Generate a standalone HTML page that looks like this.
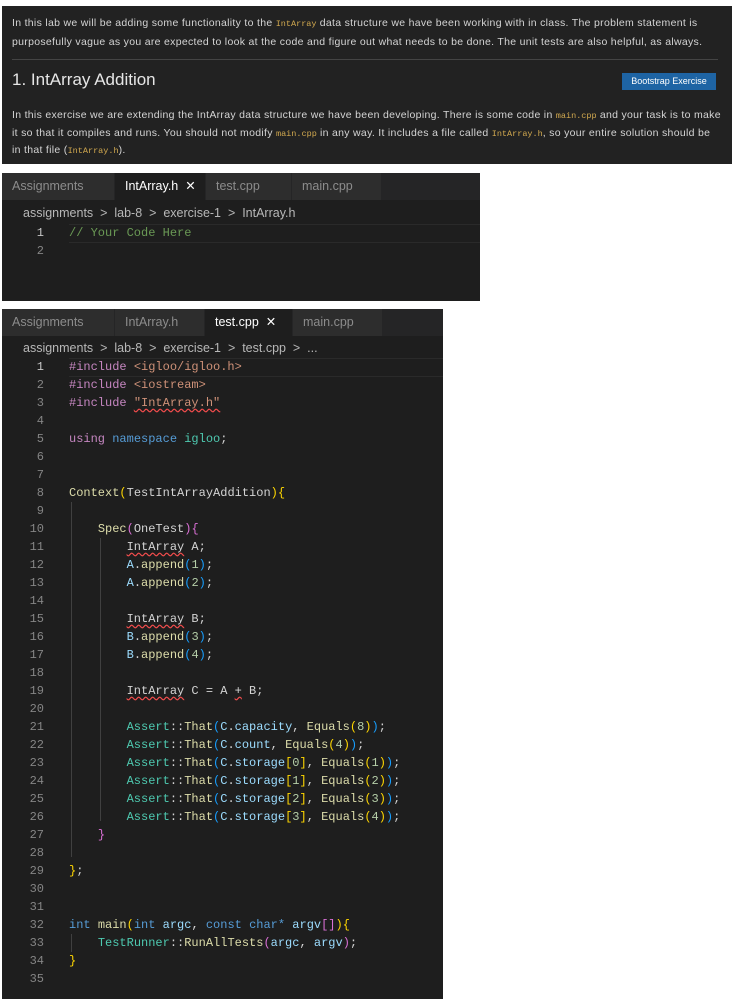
<!DOCTYPE html>
<html><head><style>
body{margin:0;background:#fff;width:734px;height:1005px;position:relative;overflow:hidden;font-family:"Liberation Sans",sans-serif}
.top{position:absolute;left:2px;top:6px;width:730px;height:158px;background:#222;color:#d4d4d4;font-size:10.5px;letter-spacing:0.3px}
.top p{position:absolute;left:10px;margin:0;width:712px;white-space:nowrap}
.c{font-family:"Liberation Mono",monospace;color:#d2a94f;font-size:8.5px;letter-spacing:0}
.hr{position:absolute;left:10px;width:706px;top:53px;height:1px;background:#444}
.h1{position:absolute;left:10px;top:64px;font-size:17px;color:#e6e6e6;letter-spacing:0}
.badge{position:absolute;left:620px;top:67px;width:94px;height:17px;background:#1e64a4;color:#fff;font-size:9px;line-height:17px;text-align:center;letter-spacing:0}
.ed{position:absolute;left:2px;background:#1e1e1e;font-family:"Liberation Sans",sans-serif}
.tabs{position:absolute;left:0;top:0;height:27px;background:#252526;width:100%}
.tab{position:absolute;top:0;height:27px;line-height:26px;background:#2d2d2d;color:#8c8c8c;font-size:12.5px;padding-left:10px;box-sizing:border-box;border-right:1px solid #252526}
.tab.a{background:#1e1e1e;color:#fff}
.bc{position:absolute;left:21px;color:#b8b8b8;font-size:12.5px}
.code{position:absolute;left:0;font-family:"Liberation Mono",monospace;font-size:12px;white-space:pre;color:#d4d4d4}
.ln{position:absolute;width:42px;text-align:right;color:#858585;font-family:"Liberation Mono",monospace;font-size:12px}
.l{height:18px;line-height:18px}
.pp{color:#c586c0}.s{color:#ce9178}.k{color:#569cd6}.t{color:#4ec9b0}.f{color:#dcdcaa}.v{color:#9cdcfe}.n{color:#b5cea8}.cm{color:#6a9955}
.y{color:#ffd700}.p{color:#da70d6}.b{color:#179fff}
.sq{text-decoration:underline wavy #f14c4c;text-underline-offset:2px}
.guide{position:absolute;width:1px;background:#404040}
</style></head><body>
<div class="top">
<p style="top:8px;line-height:18px">In this lab we will be adding some functionality to the <span class="c">IntArray</span> data structure we have been working with in class. The problem statement is<br>purposefully vague as you are expected to look at the code and figure out what needs to be done. The unit tests are also helpful, as always.</p>
<div class="hr"></div>
<div class="h1">1. IntArray Addition</div>
<div class="badge">Bootstrap Exercise</div>
<p style="top:101px;line-height:16.5px">In this exercise we are extending the IntArray data structure we have been developing. There is some code in <span class="c">main.cpp</span> and your task is to make<br>it so that it compiles and runs. You should not modify <span class="c">main.cpp</span> in any way. It includes a file called <span class="c">IntArray.h</span>, so your entire solution should be<br>in that file (<span class="c">IntArray.h</span>).</p>
</div>

<div class="ed" style="top:173px;width:478px;height:128px">
<div class="tabs">
<div class="tab" style="left:0;width:113px">Assignments</div>
<div class="tab a" style="left:113px;width:91px">IntArray.h&nbsp; ✕</div>
<div class="tab" style="left:204px;width:86px">test.cpp</div>
<div class="tab" style="left:290px;width:90px">main.cpp</div>
</div>
<div class="bc" style="top:33px">assignments &nbsp;&gt;&nbsp; lab-8 &nbsp;&gt;&nbsp; exercise-1 &nbsp;&gt;&nbsp; IntArray.h</div>
<div style="position:absolute;left:67px;top:51px;width:411px;height:17px;border-top:1px solid #2a2a2a;border-bottom:1px solid #2a2a2a"></div>
<div class="ln" style="top:51px;left:0"><div class="l" style="color:#c6c6c6">1</div><div class="l">2</div></div>
<div class="code" style="left:67px;top:51px"><div class="l cm">// Your Code Here</div></div>
</div>

<div class="ed" style="top:309px;width:441px;height:690px">
<div class="tabs">
<div class="tab" style="left:0;width:113px">Assignments</div>
<div class="tab" style="left:113px;width:90px">IntArray.h</div>
<div class="tab a" style="left:203px;width:88px">test.cpp&nbsp; ✕</div>
<div class="tab" style="left:291px;width:90px">main.cpp</div>
</div>
<div class="bc" style="top:32px">assignments &nbsp;&gt;&nbsp; lab-8 &nbsp;&gt;&nbsp; exercise-1 &nbsp;&gt;&nbsp; test.cpp &nbsp;&gt;&nbsp; ...</div>
<div style="position:absolute;left:67px;top:49px;width:374px;height:17px;border-top:1px solid #2a2a2a;border-bottom:1px solid #2a2a2a"></div>
<div class="guide" style="left:69px;top:193px;height:355px"></div>
<div class="guide" style="left:98px;top:229px;height:283px"></div>
<div class="guide" style="left:69px;top:625px;height:18px"></div>
<div class="ln" style="top:49px;left:0"><div class="l" style="color:#c6c6c6">1</div><div class="l">2</div><div class="l">3</div><div class="l">4</div><div class="l">5</div><div class="l">6</div><div class="l">7</div><div class="l">8</div><div class="l">9</div><div class="l">10</div><div class="l">11</div><div class="l">12</div><div class="l">13</div><div class="l">14</div><div class="l">15</div><div class="l">16</div><div class="l">17</div><div class="l">18</div><div class="l">19</div><div class="l">20</div><div class="l">21</div><div class="l">22</div><div class="l">23</div><div class="l">24</div><div class="l">25</div><div class="l">26</div><div class="l">27</div><div class="l">28</div><div class="l">29</div><div class="l">30</div><div class="l">31</div><div class="l">32</div><div class="l">33</div><div class="l">34</div><div class="l">35</div></div>
<div class="code" style="left:67px;top:49px"><div class="l"><span class="pp">#include</span> <span class="s">&lt;igloo/igloo.h&gt;</span></div><div class="l"><span class="pp">#include</span> <span class="s">&lt;iostream&gt;</span></div><div class="l"><span class="pp">#include</span> <span class="s sq">"IntArray.h"</span></div><div class="l"> </div><div class="l"><span class="pp">using</span> <span class="k">namespace</span> <span class="t">igloo</span>;</div><div class="l"> </div><div class="l"> </div><div class="l"><span class="f">Context</span><span class="y">(</span>TestIntArrayAddition<span class="y">){</span></div><div class="l"> </div><div class="l">    <span class="f">Spec</span><span class="p">(</span>OneTest<span class="p">){</span></div><div class="l">        <span class="sq">IntArray</span> A;</div><div class="l">        <span class="v">A</span>.<span class="f">append</span><span class="b">(</span><span class="n">1</span><span class="b">)</span>;</div><div class="l">        <span class="v">A</span>.<span class="f">append</span><span class="b">(</span><span class="n">2</span><span class="b">)</span>;</div><div class="l"> </div><div class="l">        <span class="sq">IntArray</span> B;</div><div class="l">        <span class="v">B</span>.<span class="f">append</span><span class="b">(</span><span class="n">3</span><span class="b">)</span>;</div><div class="l">        <span class="v">B</span>.<span class="f">append</span><span class="b">(</span><span class="n">4</span><span class="b">)</span>;</div><div class="l"> </div><div class="l">        <span class="sq">IntArray</span> C = A <span class="sq">+</span> B;</div><div class="l"> </div><div class="l">        <span class="t">Assert</span>::<span class="f">That</span><span class="b">(</span><span class="v">C</span>.<span class="v">capacity</span>, <span class="f">Equals</span><span class="y">(</span><span class="n">8</span><span class="y">)</span><span class="b">)</span>;</div><div class="l">        <span class="t">Assert</span>::<span class="f">That</span><span class="b">(</span><span class="v">C</span>.<span class="v">count</span>, <span class="f">Equals</span><span class="y">(</span><span class="n">4</span><span class="y">)</span><span class="b">)</span>;</div><div class="l">        <span class="t">Assert</span>::<span class="f">That</span><span class="b">(</span><span class="v">C</span>.<span class="v">storage</span><span class="y">[</span><span class="n">0</span><span class="y">]</span>, <span class="f">Equals</span><span class="y">(</span><span class="n">1</span><span class="y">)</span><span class="b">)</span>;</div><div class="l">        <span class="t">Assert</span>::<span class="f">That</span><span class="b">(</span><span class="v">C</span>.<span class="v">storage</span><span class="y">[</span><span class="n">1</span><span class="y">]</span>, <span class="f">Equals</span><span class="y">(</span><span class="n">2</span><span class="y">)</span><span class="b">)</span>;</div><div class="l">        <span class="t">Assert</span>::<span class="f">That</span><span class="b">(</span><span class="v">C</span>.<span class="v">storage</span><span class="y">[</span><span class="n">2</span><span class="y">]</span>, <span class="f">Equals</span><span class="y">(</span><span class="n">3</span><span class="y">)</span><span class="b">)</span>;</div><div class="l">        <span class="t">Assert</span>::<span class="f">That</span><span class="b">(</span><span class="v">C</span>.<span class="v">storage</span><span class="y">[</span><span class="n">3</span><span class="y">]</span>, <span class="f">Equals</span><span class="y">(</span><span class="n">4</span><span class="y">)</span><span class="b">)</span>;</div><div class="l">    <span class="p">}</span></div><div class="l"> </div><div class="l"><span class="y">}</span>;</div><div class="l"> </div><div class="l"> </div><div class="l"><span class="k">int</span> <span class="f">main</span><span class="y">(</span><span class="k">int</span> <span class="v">argc</span>, <span class="k">const</span> <span class="k">char</span><span class="k">*</span> <span class="v">argv</span><span class="p">[]</span><span class="y">){</span></div><div class="l">    <span class="t">TestRunner</span>::<span class="f">RunAllTests</span><span class="p">(</span><span class="v">argc</span>, <span class="v">argv</span><span class="p">)</span>;</div><div class="l"><span class="y">}</span></div><div class="l"> </div></div>
</div>
</body></html>
